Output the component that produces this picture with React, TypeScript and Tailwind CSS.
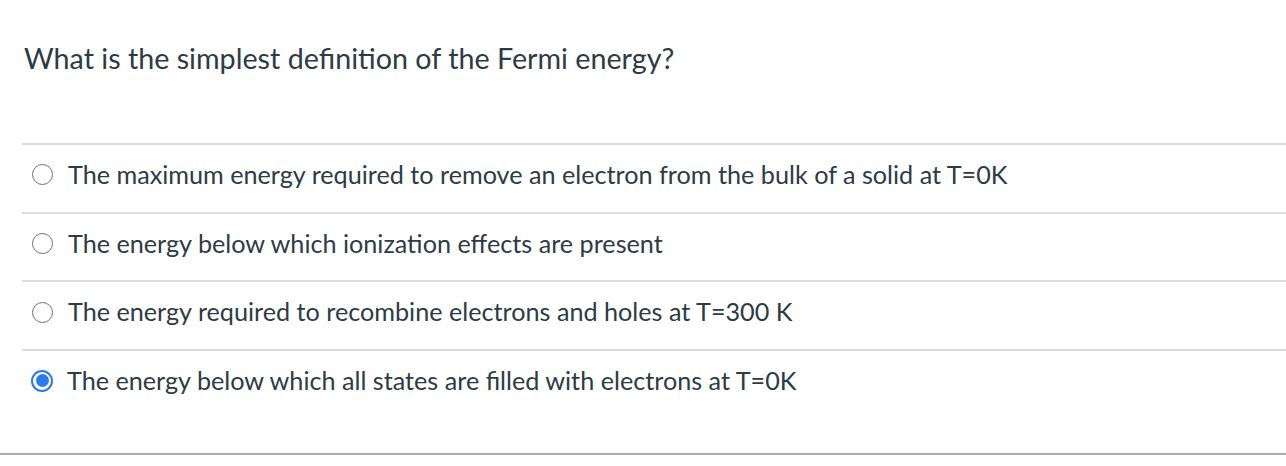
import React from "react";

const options = [
  "The maximum energy required to remove an electron from the bulk of a solid at T=0K",
  "The energy below which ionization effects are present",
  "The energy required to recombine electrons and holes at T=300 K",
  "The energy below which all states are filled with electrons at T=0K",
];

function Radio({ checked }: { checked: boolean }) {
  if (checked) {
    return (
      <span className="flex h-[22px] w-[22px] shrink-0 items-center justify-center rounded-full border-[2px] border-[#2b7bef] bg-white">
        <span className="h-[13px] w-[13px] rounded-full bg-[#2b7bef]" />
      </span>
    );
  }
  return <span className="ml-[1px] mr-[1px] h-[21px] w-[21px] shrink-0 rounded-full border-[1.5px] border-[#6f6f6f] bg-white" />;
}

export default function App() {
  return (
    <div
      className="h-[466px] w-[1286px] bg-white text-[#2d3b45]"
      style={{ fontFamily: "Lato, 'Liberation Sans', sans-serif" }}
    >
      <div className="pl-[24px] pt-[39px] text-[28.7px] leading-[38px]">
        What is the simplest definition of the Fermi energy?
      </div>
      <div className="ml-[22px] mt-[66px]">
        {options.map((o, i) => (
          <div
            key={i}
            className="flex h-[68.7px] items-center gap-[14px] border-t-[2px] border-[#dcdcdc] pb-[7px] pl-[9px] text-[25.2px]"
          >
            <Radio checked={i === 3} />
            <span>{o}</span>
          </div>
        ))}
      </div>
      <div className="mt-[35px] h-[2px] w-full bg-[#aaaaaa]" />
    </div>
  );
}
